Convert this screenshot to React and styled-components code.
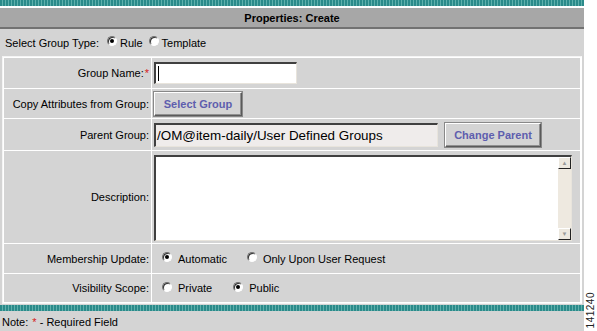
import React from 'react';
import styled, { createGlobalStyle } from 'styled-components';

const GlobalStyle = createGlobalStyle`
  html, body {
    margin: 0;
    padding: 0;
    background: #ffffff;
  }
  body {
    font-family: "Liberation Sans", Arial, sans-serif;
    font-size: 11px;
    color: #000;
  }
`;

const Page = styled.div`
  display: flex;
  width: 597px;
  height: 331px;
  overflow: hidden;
`;

const Main = styled.div`
  width: 584px;
  display: flex;
  flex-direction: column;
  background: #d4d4d4;

  & > * {
    flex-shrink: 0;
  }
`;

const Side = styled.div`
  flex: 1;
  display: flex;
  align-items: flex-end;
  justify-content: center;
  padding-bottom: 3px;
  background: #fff;
`;

const FigNum = styled.span`
  writing-mode: vertical-rl;
  transform: rotate(180deg);
  font-size: 10px;
  letter-spacing: 0.5px;
  color: #222;
`;

const TealBar = styled.div`
  height: ${p => p.$h || 6}px;
  background: repeating-linear-gradient(90deg, #2b8a8a 0, #2b8a8a 2px, #5fb0ac 2px, #5fb0ac 3px);
  border-bottom: ${p => p.$edgeW || 1}px solid ${p => p.$edge || '#ffffff'};
`;

const Header = styled.div`
  height: 19px;
  background: #a7a7a7;
  border-bottom: 2px solid #727272;
  display: flex;
  align-items: center;
  justify-content: center;
  font-weight: bold;
  font-size: 11px;
`;

const TypeRow = styled.div`
  height: 27px;
  display: flex;
  align-items: center;
  padding-left: 5px;
  gap: 6px;
`;

const Table = styled.div`
  margin: 0 2px 1px 2px;
  border: 1px solid #f4f4f4;
  border-right-color: #ffffff;
`;

const Grid = styled.div`
  display: grid;
  grid-template-columns: 147px 1fr;
  gap: 1px;
  background: #ffffff;
  border: 1px solid #ffffff;
`;

const Label = styled.div`
  box-sizing: border-box;
  background: #d4d4d4;
  height: ${p => p.$h}px;
  display: flex;
  align-items: center;
  justify-content: flex-end;
  padding-right: 2px;
`;

const Cell = styled.div`
  box-sizing: border-box;
  background: #d4d4d4;
  height: ${p => p.$h}px;
  display: flex;
  align-items: ${p => (p.$top ? 'flex-start' : 'center')};
  padding: ${p => (p.$top ? '4px 0 0 2px' : '0 0 0 2px')};
  gap: ${p => p.$gap || 6}px;
`;

const Star = styled.span`
  color: #d62020;
  margin-left: 1px;
`;

const TextInput = styled.div`
  width: ${p => p.$w}px;
  height: ${p => p.$ht}px;
  box-sizing: border-box;
  background: ${p => p.$bg || '#ffffff'};
  border-top: 2px solid #404040;
  border-left: 2px solid #404040;
  border-right: 1px solid #e8e4dc;
  border-bottom: 1px solid #e8e4dc;
  display: flex;
  align-items: center;
  padding-left: 1px;
  font-size: 13.4px;
`;

const Caret = styled.span`
  width: 1px;
  height: 15px;
  background: #000;
  margin-left: 1px;
`;

const Button = styled.div`
  width: ${p => p.$w}px;
  height: 24px;
  box-sizing: border-box;
  border: 1px solid #ffffff;
  border-right-color: #5a5a5a;
  border-bottom-color: #5a5a5a;
  box-shadow: inset -1px -1px 0 #909090, 0 0 0 1px #888;
  background: #d4d4d4;
  color: #5e5eae;
  font-weight: bold;
  font-size: 11px;
  display: flex;
  align-items: center;
  justify-content: center;
`;

const TextArea = styled.div`
  width: 418px;
  height: 86px;
  box-sizing: border-box;
  background: #fff;
  border-top: 2px solid #404040;
  border-left: 2px solid #404040;
  border-right: 1px solid #e8e4dc;
  border-bottom: 1px solid #e8e4dc;
  display: flex;
  justify-content: flex-end;
`;

const ScrollBar = styled.div`
  width: 13px;
  background: #eee9e0;
  display: flex;
  flex-direction: column;
  justify-content: space-between;
`;

const ScrollBtn = styled.div`
  height: 12px;
  box-sizing: border-box;
  background: #ece8df;
  border: 1px solid #fff;
  border-right-color: #222;
  border-bottom-color: #222;
  display: flex;
  align-items: center;
  justify-content: center;
  font-size: 6px;
  color: #999;
  line-height: 1;
`;

const RadioWrap = styled.label`
  display: flex;
  align-items: center;
  gap: ${p => p.$gap || 4}px;
  margin-left: ${p => p.$ml || 0}px;
`;

const RadioCircle = styled.span`
  width: 10px;
  height: 10px;
  border-radius: 50%;
  box-sizing: border-box;
  background: #fff;
  border: 1px solid;
  border-color: #707070 #fff #fff #707070;
  box-shadow: inset 1px 1px 0 #303030;
  display: flex;
  align-items: center;
  justify-content: center;
  margin-top: ${p => (p.$up ? -3 : 0)}px;

  &::after {
    content: '';
    width: 4px;
    height: 4px;
    border-radius: 50%;
    background: ${p => (p.$on ? '#000' : 'transparent')};
  }
`;

const Note = styled.div`
  height: 19px;
  display: flex;
  align-items: center;
  padding-left: 2px;
`;

const Radio = ({ on, children, gap, ml, up }) => (
  <RadioWrap $gap={gap} $ml={ml}>
    <RadioCircle $on={on} $up={up} />
    <span>{children}</span>
  </RadioWrap>
);

export default function App() {
  return (
    <>
      <GlobalStyle />
      <Page>
        <Main>
          <TealBar $h={6} $edgeW={2} />
          <Header>Properties: Create</Header>
          <TypeRow>
            <span>Select Group Type:</span>
            <Radio on gap={3} ml={2} up>Rule</Radio>
            <Radio gap={3} up>Template</Radio>
          </TypeRow>
          <Table>
            <Grid>
              <Label $h={30}>Group Name:<Star>*</Star></Label>
              <Cell $h={30}>
                <TextInput $w={143} $ht={22}><Caret /></TextInput>
              </Cell>

              <Label $h={29}>Copy Attributes from Group:</Label>
              <Cell $h={29}>
                <Button $w={88}>Select Group</Button>
              </Cell>

              <Label $h={31}>Parent Group:</Label>
              <Cell $h={31} $gap={7}>
                <TextInput $w={284} $ht={24} $bg="#efeceb">/OM@item-daily/User Defined Groups</TextInput>
                <Button $w={96}>Change Parent</Button>
              </Cell>

              <Label $h={92}>Description:</Label>
              <Cell $h={92} $top>
                <TextArea>
                  <ScrollBar>
                    <ScrollBtn>▲</ScrollBtn>
                    <ScrollBtn>▼</ScrollBtn>
                  </ScrollBar>
                </TextArea>
              </Cell>

              <Label $h={29}>Membership Update:</Label>
              <Cell $h={29} $gap={0}>
                <Radio on gap={6} ml={8} up>Automatic</Radio>
                <Radio gap={6} ml={14} up>Only Upon User Request</Radio>
              </Cell>

              <Label $h={28}>Visibility Scope:</Label>
              <Cell $h={28} $gap={0}>
                <Radio gap={6} ml={8} up>Private</Radio>
                <Radio on gap={6} ml={15} up>Public</Radio>
              </Cell>
            </Grid>
          </Table>
          <TealBar $h={6} $edge="#d4d4d4" />
          <Note>Note:&nbsp;<Star>*</Star>&nbsp;- Required Field</Note>
        </Main>
        <Side>
          <FigNum>141240</FigNum>
        </Side>
      </Page>
    </>
  );
}
